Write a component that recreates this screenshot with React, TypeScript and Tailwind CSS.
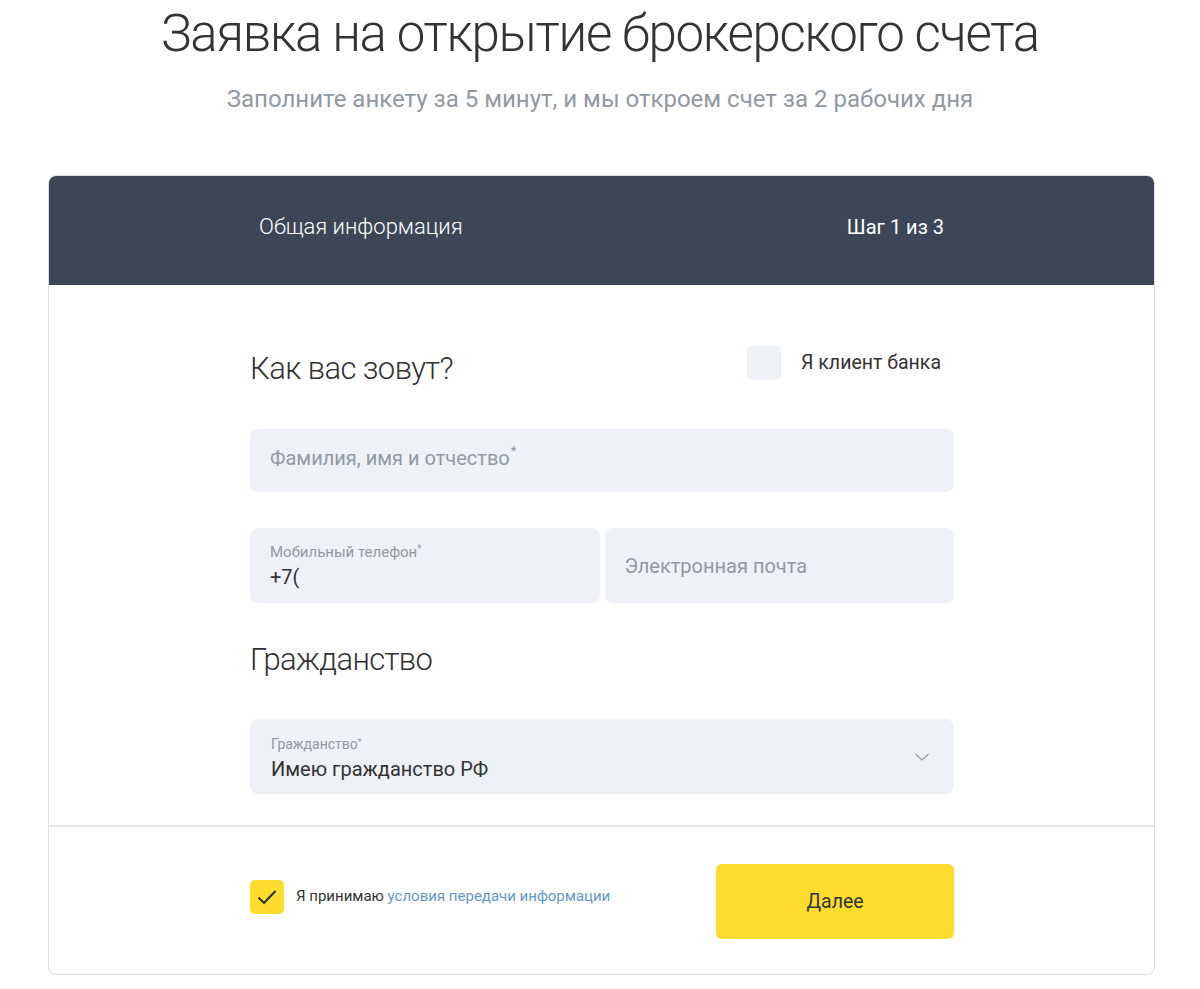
export default function App() {
  return (
    <div className="min-h-screen w-full bg-white font-['Roboto',sans-serif] text-[#333333]">
      {/* Heading */}
      <div className="flex flex-col items-center pt-[2px]">
        <h1 className="text-[51px] font-light leading-[64px] tracking-[-1.3px] text-[#333333]">
          Заявка на открытие брокерского счета
        </h1>
        <p className="mt-[19px] text-[24px] leading-[28px] text-[#9299a2]">
          Заполните анкету за 5 минут, и мы откроем счет за 2 рабочих дня
        </p>
      </div>

      {/* Card */}
      <div className="ml-[48px] mt-[62px] w-[1107px] overflow-hidden rounded-[8px] border border-[#dddfe3]">
        <div className="flex h-[109px] items-center bg-[#3d4657] pb-[8px] pl-[210px] pr-[210px] text-white">
          <span className="text-[22px] font-light">Общая информация</span>
          <span className="ml-auto text-[20px]">Шаг 1 из 3</span>
        </div>

        <div className="ml-[201px] w-[704px] pb-[31px] pt-[61px]">
          <div className="flex items-center justify-between">
            <h2 className="translate-y-[6px] text-[31px] font-light leading-[34px] tracking-[-0.6px]">Как вас зовут?</h2>
            <label className="flex items-center gap-[20px] pr-[13px]">
              <span className="h-[34px] w-[34px] rounded-[5px] bg-[#eef1f5]" />
              <span className="text-[19.5px]">Я клиент банка</span>
            </label>
          </div>

          <div className="mt-[49px] flex h-[63px] items-center rounded-[8px] bg-[#eef1f5] px-[20px] pb-[6px] text-[20px] text-[#9299a2]">
            Фамилия, имя и отчество<sup className="ml-[1px] text-[13px]">*</sup>
          </div>

          <div className="mt-[36px] flex gap-[5px]">
            <div className="flex h-[75px] flex-1 flex-col justify-center rounded-[8px] bg-[#eef1f5] px-[20px]">
              <span className="text-[15px] leading-[18px] text-[#9299a2]">
                Мобильный телефон<sup className="text-[10px]">*</sup>
              </span>
              <span className="mt-[5px] text-[20px] leading-[22px] text-[#333333]">+7(</span>
            </div>
            <div className="flex h-[75px] flex-1 items-center rounded-[8px] bg-[#eef1f5] px-[20px] text-[20px] text-[#9299a2]">
              Электронная почта
            </div>
          </div>

          <h2 className="mt-[40px] text-[31px] font-light leading-[34px] tracking-[-0.6px]">Гражданство</h2>

          <div className="mt-[42px] flex h-[75px] items-center rounded-[8px] bg-[#eef1f5] pl-[21px] pr-[24px]">
            <div className="flex flex-col pt-[3px]">
              <span className="text-[14px] leading-[17px] text-[#9299a2]">
                Гражданство<sup className="text-[9px]">*</sup>
              </span>
              <span className="mt-[5px] text-[20px] leading-[22px] text-[#333333]">Имею гражданство РФ</span>
            </div>
            <svg className="ml-auto" width="16" height="10" viewBox="0 0 16 10" fill="none">
              <path d="M1.5 2L8 8L14.5 2" stroke="#9299a2" strokeWidth="1.2" />
            </svg>
          </div>
        </div>

        <div className="border-t-2 border-[#e6e7ea]">
          <div className="ml-[201px] flex w-[704px] items-start pb-[35px] pt-[37px]">
            <span className="mt-[16px] flex h-[34px] w-[34px] items-center justify-center rounded-[5px] bg-[#ffdd2d]">
              <svg width="22" height="18" viewBox="0 0 22 18" fill="none">
                <path d="M2.5 9.5L8 15L19.5 3" stroke="#333333" strokeWidth="2.2" />
              </svg>
            </span>
            <span className="ml-[12px] mt-[22px] text-[15px] leading-[20px] text-[#333333]">
              Я принимаю <a href="#" className="text-[#5f98cc]">условия передачи информации</a>
            </span>
            <button className="ml-auto h-[75px] w-[238px] rounded-[6px] bg-[#ffdd2d] text-[19.5px] text-[#333333]">
              Далее
            </button>
          </div>
        </div>
      </div>
    </div>
  );
}
